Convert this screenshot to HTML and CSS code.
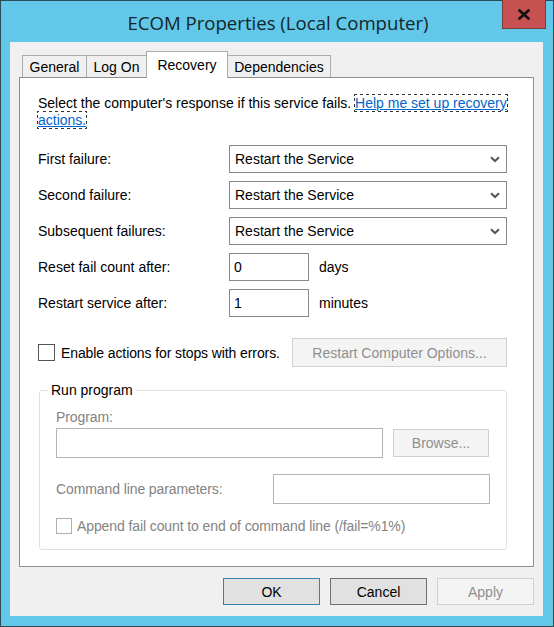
FILE: index.html
```html
<!DOCTYPE html>
<html>
<head>
<meta charset="utf-8">
<title>ECOM Properties (Local Computer)</title>
<link rel="stylesheet" href="styles.css">
</head>
<body>
<div class="window">
  <div class="titlebar">
    <span class="title">ECOM Properties (Local Computer)</span>
    <div class="close">
      <svg width="12" height="11" viewBox="0 0 12 11"><path d="M1.5 1.5 L10.5 9.5 M10.5 1.5 L1.5 9.5" stroke="#111" stroke-width="2.6" stroke-linecap="square" fill="none"/></svg>
    </div>
  </div>
  <div class="client">
    <div class="tabs">
      <div class="tab t-general">General</div>
      <div class="tab t-logon">Log On</div>
      <div class="tab t-recovery active">Recovery</div>
      <div class="tab t-deps">Dependencies</div>
    </div>
    <div class="panel">
      <p class="intro">Select the computer's response if this service fails. <a class="link">Help me set up recovery<br>actions.</a></p>
      <div class="form">
        <span class="lbl">First failure:</span>
        <div class="combo"><span>Restart the Service</span><svg width="10" height="7" viewBox="0 0 10 7"><path d="M1 1.2 L5 5 L9 1.2" stroke="#555" stroke-width="2" fill="none"/></svg></div>
        <span class="lbl">Second failure:</span>
        <div class="combo"><span>Restart the Service</span><svg width="10" height="7" viewBox="0 0 10 7"><path d="M1 1.2 L5 5 L9 1.2" stroke="#555" stroke-width="2" fill="none"/></svg></div>
        <span class="lbl">Subsequent failures:</span>
        <div class="combo"><span>Restart the Service</span><svg width="10" height="7" viewBox="0 0 10 7"><path d="M1 1.2 L5 5 L9 1.2" stroke="#555" stroke-width="2" fill="none"/></svg></div>
        <span class="lbl">Reset fail count after:</span>
        <div class="numrow"><div class="edit num">0</div><span class="unit">days</span></div>
        <span class="lbl">Restart service after:</span>
        <div class="numrow"><div class="edit num">1</div><span class="unit">minutes</span></div>
      </div>
      <div class="checkrow">
        <span class="check"></span>
        <span class="checklbl">Enable actions for stops with errors.</span>
        <div class="btn disabled restart">Restart Computer Options...</div>
      </div>
      <fieldset class="group">
        <legend>Run program</legend>
        <div class="dim plabel">Program:</div>
        <div class="progrow">
          <div class="edit dis prog"></div>
          <div class="btn disabled browse">Browse...</div>
        </div>
        <div class="cmdrow">
          <span class="dim cmdlabel">Command line parameters:</span>
          <div class="edit dis cmd"></div>
        </div>
        <div class="appendrow">
          <span class="check dischk"></span>
          <span class="dim">Append fail count to end of command line (/fail=%1%)</span>
        </div>
      </fieldset>
    </div>
    <div class="buttons">
      <div class="btn default">OK</div>
      <div class="btn focus">Cancel</div>
      <div class="btn disabled">Apply</div>
    </div>
  </div>
</div>
</body>
</html>
```

FILE: styles.css
```css
html, body {
  margin: 0;
  padding: 0;
}
body {
  width: 554px;
  height: 627px;
  overflow: hidden;
  font-family: "Liberation Sans", Arial, sans-serif;
  font-size: 14px;
  color: #000;
}
.window {
  box-sizing: border-box;
  width: 554px;
  height: 627px;
  border: 1px solid #2e4b56;
  background: #62c8e9;
  display: flex;
  flex-direction: column;
}
.titlebar {
  position: relative;
  height: 41px;
  flex: none;
  display: flex;
  align-items: center;
  justify-content: center;
}
.title {
  font-family: "Open Sans", "Noto Sans", sans-serif;
  font-size: 18.6px;
  color: #15262a;
  padding-top: 1px;
  margin-left: 2px;
}
.close {
  position: absolute;
  top: -1px;
  right: 7px;
  width: 44px;
  height: 29px;
  box-sizing: border-box;
  background: #c75050;
  border: 1px solid #7d3a37;
  border-top: none;
  display: flex;
  align-items: center;
  justify-content: center;
}
.client {
  margin: 0 10px 0 9px;
  height: 574px;
  background: #f0f0f0;
  display: flex;
  flex-direction: column;
}
.tabs {
  margin: 9px 0 -1px 12px;
  height: 27px;
  display: flex;
  align-items: flex-end;
  position: relative;
  z-index: 1;
}
.tab {
  box-sizing: border-box;
  height: 22px;
  margin-bottom: 1px;
  margin-right: -1px;
  border: 1px solid #acacac;
  border-bottom: none;
  background: #f0f0f0;
  padding-top: 3px;
  line-height: 16px;
  text-align: center;
}
.t-general { width: 65px; }
.t-logon { width: 61px; }
.t-recovery { width: 82px; }
.t-deps { width: 104px; }
.tab.active {
  height: 27px;
  margin-bottom: 0;
  background: #fff;
  padding-top: 5px;
  position: relative;
  z-index: 2;
}
.panel {
  box-sizing: border-box;
  margin: 0 9px;
  height: 490px;
  border: 1px solid #8e8f90;
  background: #fff;
  padding: 17px 26px 0 18px;
}
.intro {
  margin: 0;
  line-height: 17px;
}
.link {
  color: #0066cc;
  text-decoration: underline;
  outline: 1px dotted #333;
  outline-offset: 0;
}
.form {
  margin-top: 16px;
  display: grid;
  grid-template-columns: 191px 1fr;
  grid-auto-rows: 28px;
  row-gap: 8px;
  align-items: center;
}
.combo {
  box-sizing: border-box;
  height: 28px;
  border: 1px solid #8a8a8a;
  display: flex;
  align-items: center;
  justify-content: space-between;
  padding: 0 6px 0 5px;
}
.combo svg { display: block; }
.numrow {
  display: flex;
  align-items: center;
}
.edit {
  box-sizing: border-box;
  border: 1px solid #8a8a8a;
  background: #fff;
}
.num {
  width: 80px;
  height: 28px;
  line-height: 26px;
  padding-left: 4px;
}
.unit {
  margin-left: 10px;
}
.checkrow {
  margin-top: 21px;
  display: flex;
  align-items: center;
}
.check {
  box-sizing: border-box;
  width: 17px;
  height: 17px;
  border: 1px solid #555;
  background: #fff;
  flex: none;
}
.checklbl {
  margin-left: 6px;
  letter-spacing: -0.1px;
}
.btn {
  box-sizing: border-box;
  height: 27px;
  width: 97px;
  border: 1px solid #adadad;
  background: #e1e1e1;
  display: flex;
  align-items: center;
  justify-content: center;
}
.btn.disabled {
  background: #f4f4f4;
  border-color: #d0d0d0;
  color: #8f8f8f;
}
.btn.default {
  border-color: #3c7fb1;
}
.btn.focus {
  border-color: #707070;
}
.restart {
  margin-left: auto;
  width: 215px;
  height: 29px;
}
.group {
  margin: 15px 0 0 1px;
  padding: 11px 16px 15px 16px;
  border: 1px solid #dbe1e6;
  border-radius: 3px;
  min-width: 0;
}
.group legend {
  margin-left: -8px;
  padding: 0 3px;
  line-height: 16px;
}
.dim {
  color: #838383;
  letter-spacing: -0.1px;
}
.plabel {
  line-height: 16px;
}
.progrow {
  margin-top: 3px;
  display: flex;
  align-items: center;
}
.edit.dis {
  border-color: #b4b4b4;
}
.prog {
  width: 327px;
  height: 30px;
}
.browse {
  margin-left: 10px;
  width: 96px;
  height: 28px;
}
.cmdrow {
  margin-top: 16px;
  display: flex;
  align-items: center;
}
.cmdlabel {
  width: 217px;
  flex: none;
}
.cmd {
  width: 218px;
  height: 30px;
}
.appendrow {
  margin-top: 14px;
  display: flex;
  align-items: center;
}
.dischk {
  width: 16px;
  height: 16px;
  border-color: #b0b0b0;
  margin-right: 5px;
}
.buttons {
  margin: 11px 9px 0 0;
  display: flex;
  justify-content: flex-end;
  gap: 10px;
}
```
